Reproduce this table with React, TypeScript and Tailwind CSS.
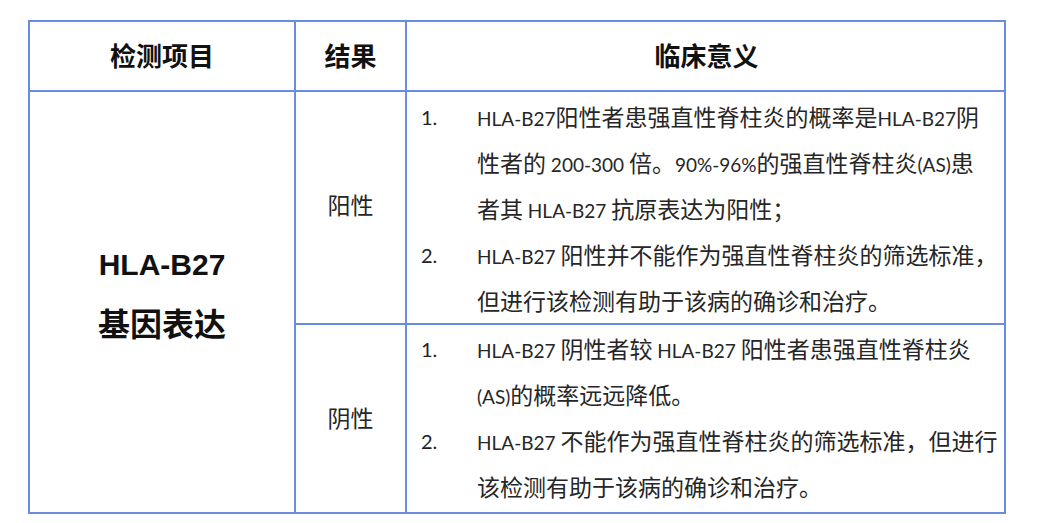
const body = "font-['Lato','Noto_Sans_CJK_SC',sans-serif]";

type Item = { n: string; lines: string[] };

const positive: Item[] = [
  {
    n: "1.",
    lines: [
      "HLA-B27阳性者患强直性脊柱炎的概率是HLA-B27阴",
      "性者的 200-300 倍。90%-96%的强直性脊柱炎(AS)患",
      "者其 HLA-B27 抗原表达为阳性；",
    ],
  },
  {
    n: "2.",
    lines: [
      "HLA-B27 阳性并不能作为强直性脊柱炎的筛选标准，",
      "但进行该检测有助于该病的确诊和治疗。",
    ],
  },
];

const negative: Item[] = [
  {
    n: "1.",
    lines: ["HLA-B27 阴性者较 HLA-B27 阳性者患强直性脊柱炎", "(AS)的概率远远降低。"],
  },
  {
    n: "2.",
    lines: ["HLA-B27 不能作为强直性脊柱炎的筛选标准，但进行", "该检测有助于该病的确诊和治疗。"],
  },
];

// latin runs are a touch smaller, the source used a narrow latin face
const Line = ({ text }: { text: string }) => (
  <div className="leading-[44px] whitespace-nowrap">
    {text.split(/([\x20-\x7e]+)/).map((part, i) =>
      /^[\x20-\x7e]+$/.test(part) ? (
        <span key={i} className="text-[19px]">
          {part}
        </span>
      ) : (
        <span key={i}>{part}</span>
      )
    )}
  </div>
);

const ItemList = ({ items }: { items: Item[] }) => (
  <div className="flex flex-col">
    {items.map((item) => (
      <div key={item.n} className="flex">
        <div className="w-[70px] shrink-0 pl-[14px] leading-[44px] text-[20px] text-[#222]">{item.n}</div>
        <div className="flex flex-col">
          {item.lines.map((line) => (
            <Line key={line} text={line} />
          ))}
        </div>
      </div>
    ))}
  </div>
);

export default function App() {
  return (
    <div className="w-[1051px] h-[523px] bg-white pt-[20px] pl-[28px]">
      <div
        className={`grid grid-cols-[266px_111px_599px] grid-rows-[70px_233px_187px] border-2 border-[#6a8ce0] w-[978px] text-[#262626] ${body}`}
      >
        {/* Header */}
        <div className="flex items-center justify-center border-r-2 border-b-2 border-[#6a8ce0] text-[26px] font-bold text-[#111]">
          检测项目
        </div>
        <div className="flex items-center justify-center border-r-2 border-b-2 border-[#6a8ce0] text-[26px] font-bold text-[#111]">
          结果
        </div>
        <div className="flex items-center justify-center border-b-2 border-[#6a8ce0] text-[26px] font-bold text-[#111]">
          临床意义
        </div>

        {/* Item */}
        <div className="row-span-2 flex flex-col items-center justify-center gap-[20px] border-r-2 border-[#6a8ce0] font-bold text-[#111] pb-[14px] font-['Liberation_Sans','Noto_Sans_CJK_SC',sans-serif]">
          <div className="leading-[40px] text-[30px]">HLA-B27</div>
          <div className="leading-[40px] text-[32px]">基因表达</div>
        </div>

        {/* 阳性 */}
        <div className="flex items-center justify-center border-r-2 border-b-2 border-[#6a8ce0] text-[23px] pb-[4px]">
          阳性
        </div>
        <div className="flex items-center border-b-2 border-[#6a8ce0] text-[23px] pt-[2px]">
          <ItemList items={positive} />
        </div>

        {/* 阴性 */}
        <div className="flex items-center justify-center border-r-2 border-[#6a8ce0] text-[23px]">
          阴性
        </div>
        <div className="flex items-center text-[23px] pb-[2px]">
          <ItemList items={negative} />
        </div>
      </div>
    </div>
  );
}
